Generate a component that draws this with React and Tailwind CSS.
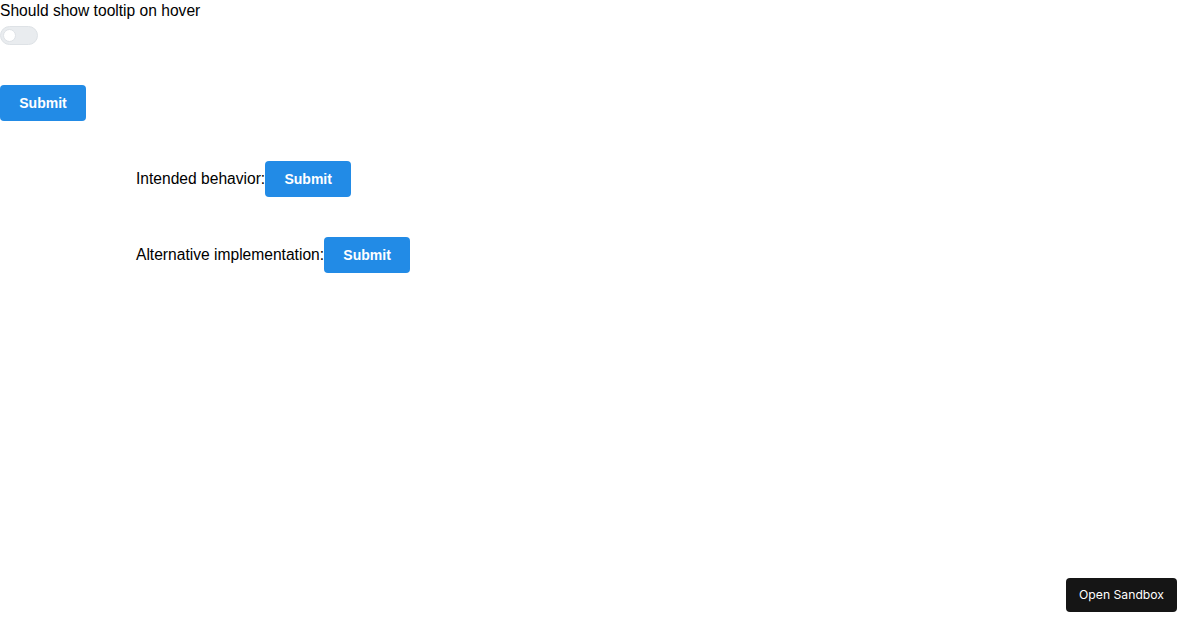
import React from 'react';

function SubmitButton() {
  return (
    <button className="h-9 w-[86px] rounded-[4px] bg-[#228be6] text-white text-sm font-bold leading-none">
      Submit
    </button>
  );
}

export default function App() {
  return (
    <div className="min-h-[630px] bg-white text-black font-['Liberation_Sans',Arial,sans-serif] text-[15.6px]">
      <div className="leading-[22px]">Should show tooltip on hover</div>
      <div className="mt-[4px] w-[38px] h-[19px] rounded-full bg-[#e9ecef] border border-[#dee2e6] flex items-center pl-[2px]">
        <span className="w-[13px] h-[13px] rounded-full bg-white border border-[#dee2e6]" />
      </div>

      <div className="mt-[40px]">
        <SubmitButton />
      </div>

      <div className="mt-10 pl-[136px] flex items-center">
        <span>Intended behavior:</span>
        <SubmitButton />
      </div>

      <div className="mt-10 pl-[136px] flex items-center">
        <span>Alternative implementation:</span>
        <SubmitButton />
      </div>

      <button className="fixed right-[23px] bottom-[18px] h-[34px] px-[13px] rounded-[4px] bg-[#151515] text-white text-[12.2px] font-['Inter',sans-serif]">
        Open Sandbox
      </button>
    </div>
  );
}
